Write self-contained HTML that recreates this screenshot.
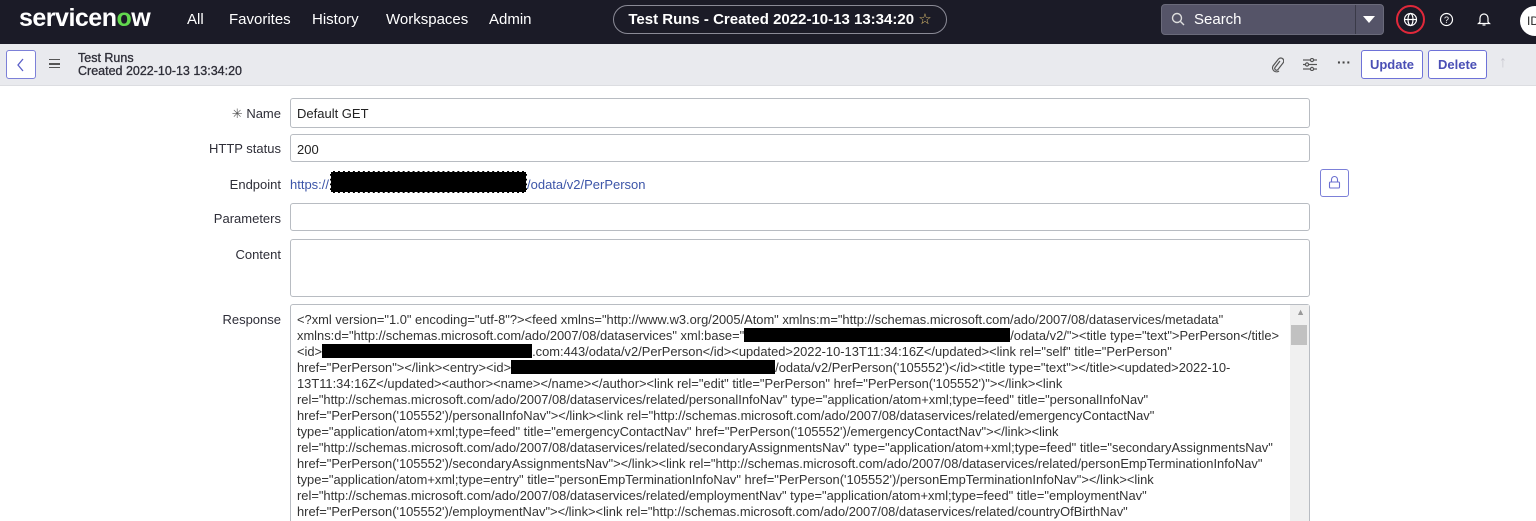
<!DOCTYPE html>
<html style="width:1536px;height:521px;overflow:hidden"><head><meta charset="utf-8"><style>
*{margin:0;padding:0;box-sizing:border-box}
body{width:1536px;height:521px;overflow:hidden;background:#fff;font-family:"Liberation Sans",sans-serif;position:relative}
.a{position:absolute}
#top{left:0;top:0;width:1536px;height:44px;background:#1b1b27;color:#fff}
#top .n{position:absolute;top:11px;font-size:15px}
#sub{left:0;top:44px;width:1536px;height:42px;background:#e9eaee;border-bottom:1px solid #dcdde1}
.lbl{position:absolute;right:1255px;font-size:13px;color:#2e2e38;text-align:right}
.inp{position:absolute;left:290px;width:1020px;border:1px solid #b8bcc2;border-radius:3px;background:#fff;font-size:13px;color:#222;padding:7px 6px}
.btn{position:absolute;height:29px;border:1px solid #6e72d8;border-radius:3px;background:#fff;color:#4a4fb5;font-weight:bold;font-size:13px;text-align:center;line-height:27px}
#resp div{position:absolute;left:6px;white-space:nowrap;font-size:12.9px;color:#333}
.blk{display:inline-block;background:#000;height:14px;vertical-align:-2px}
</style></head><body>
<div id="top" class="a">
 <div class="a" style="left:19px;top:4px;font-size:25px;font-weight:bold;letter-spacing:-0.5px">servicen<span style="color:#62d84e">o</span>w</div>
 <div class="n" style="left:187px">All</div>
 <div class="n" style="left:229px">Favorites</div>
 <div class="n" style="left:312px">History</div>
 <div class="n" style="left:386px">Workspaces</div>
 <div class="n" style="left:489px">Admin</div>
 <div class="a" style="left:613px;top:5px;width:334px;height:29px;border:1px solid #8a8a96;border-radius:15px;font-size:15px;font-weight:bold;text-align:center;line-height:27px">Test Runs - Created 2022-10-13 13:34:20 <span style="color:#e0c070;font-weight:normal">☆</span></div>
 <div class="a" style="left:1161px;top:4px;width:223px;height:31px;background:#555468;border:1px solid #6a6a7a;border-radius:4px"></div>
 <div class="a" style="left:1355px;top:5px;width:1px;height:29px;background:#3a3a48"></div>
 <svg class="a" style="left:1171px;top:12px" width="14" height="14"><circle cx="6" cy="6" r="4.5" fill="none" stroke="#ddd" stroke-width="1.4"/><line x1="9.5" y1="9.5" x2="13" y2="13" stroke="#ddd" stroke-width="1.4"/></svg>
 <div class="n" style="left:1194px">Search</div>
 <svg class="a" style="left:1363px;top:16px" width="12" height="8"><path d="M0 0H12L6 7Z" fill="#fff"/></svg>
 <div class="a" style="left:1396px;top:5px;width:29px;height:29px;border:2px solid #e0283a;border-radius:50%"></div>
 <svg class="a" style="left:1403px;top:12px" width="15" height="15" fill="none" stroke="#fff" stroke-width="1.2"><circle cx="7.5" cy="7.5" r="6"/><ellipse cx="7.5" cy="7.5" rx="2.5" ry="6"/><line x1="1.5" y1="7.5" x2="13.5" y2="7.5"/></svg>
 <svg class="a" style="left:1439px;top:12px" width="15" height="15" fill="none" stroke="#fff" stroke-width="1.2"><circle cx="7.5" cy="7.5" r="6"/><text x="5" y="11" font-size="9" fill="#fff" stroke="none" font-family="Liberation Sans">?</text></svg>
 <svg class="a" style="left:1477px;top:12px" width="14" height="15" fill="none" stroke="#fff" stroke-width="1.2"><path d="M3 10V6a4 4 0 0 1 8 0v4l1.5 1.5h-11Z"/><path d="M5.5 13h3"/></svg>
 <div class="a" style="left:1520px;top:6px;width:30px;height:30px;border-radius:50%;background:#fff;color:#222;font-size:12px;line-height:30px;padding-left:7px">ID</div>
</div>
<div id="sub" class="a">
 <div class="a" style="left:6px;top:6px;width:30px;height:29px;border:1px solid #7c80d8;border-radius:3px;background:#fff"></div>
 <svg class="a" style="left:16px;top:14px" width="10" height="14"><path d="M7 1L2 7l5 6" fill="none" stroke="#5a5fc8" stroke-width="1.3"/></svg>
 <div class="a" style="left:49px;top:15px;width:11px;height:9px;border-top:1.5px solid #555;border-bottom:1.5px solid #555"></div>
 <div class="a" style="left:49px;top:19px;width:11px;height:1.5px;background:#555"></div>
 <div class="a" style="left:78px;top:8px;font-size:12.5px;color:#2e2e38;line-height:13px;-webkit-text-stroke:0.3px #2e2e38">Test Runs<br>Created 2022-10-13 13:34:20</div>
 <svg class="a" style="left:1271px;top:13px" width="13" height="16" fill="none" stroke="#555" stroke-width="1.2"><path d="M9 4L4 10.5a1.8 1.8 0 0 0 2.8 2.2L12 6a3 3 0 0 0-4.5-4L2 9a4 4 0 0 0 6 5"/></svg>
 <svg class="a" style="left:1303px;top:14px" width="14" height="13" stroke="#555" stroke-width="1.2" fill="#e9eaee"><line x1="0" y1="2" x2="14" y2="2"/><line x1="0" y1="6.5" x2="14" y2="6.5"/><line x1="0" y1="11" x2="14" y2="11"/><circle cx="9" cy="2" r="1.6"/><circle cx="4" cy="6.5" r="1.6"/><circle cx="9" cy="11" r="1.6"/></svg>
 <div class="a" style="left:1337px;top:10px;font-size:14px;color:#444;font-weight:bold">···</div>
 <div class="btn" style="left:1361px;top:6px;width:62px">Update</div>
 <div class="btn" style="left:1428px;top:6px;width:59px">Delete</div>
 <div class="a" style="left:1499px;top:10px;font-size:16px;color:#c8c8d0">↑</div>
</div>

<div class="lbl" style="top:106px"><span style="color:#555">✳</span> Name</div>
<div class="inp" style="top:98px;height:30px">Default GET</div>
<div class="lbl" style="top:141px">HTTP status</div>
<div class="inp" style="top:134px;height:28px">200</div>
<div class="lbl" style="top:177px">Endpoint</div>
<div class="a" style="left:290px;top:177px;font-size:13px;color:#3c55a8">https://</div>
<div class="a" style="left:330px;top:171px;width:197px;height:22px;background:#000;border:1px dashed #fff"></div>
<div class="a" style="left:527px;top:177px;font-size:13px;color:#3c55a8">/odata/v2/PerPerson</div>
<div class="a" style="left:1320px;top:169px;width:29px;height:28px;border:1px solid #7c80d8;border-radius:3px"></div>
<svg class="a" style="left:1328px;top:175px" width="13" height="15" fill="none" stroke="#6a6fd0" stroke-width="1.1"><path d="M3.5 7V4.5a3 3 0 0 1 6 0V7"/><rect x="1.5" y="7" width="10" height="6" rx="1"/></svg>
<div class="lbl" style="top:211px">Parameters</div>
<div class="inp" style="top:203px;height:28px"></div>
<div class="lbl" style="top:247px">Content</div>
<div class="inp" style="top:239px;height:58px"></div>
<div class="lbl" style="top:312px">Response</div>
<div id="resp" class="inp" style="top:304px;height:230px;padding:0">
 <div class="a" style="left:auto!important;right:0;top:0;width:19px;height:230px;background:#f0f0f0"></div>
 <div class="a" style="left:auto!important;right:2px;top:20px;width:16px;height:20px;background:#c1c1c1"></div>
 <div class="a" style="left:auto!important;right:4px;top:2px;color:#999;font-size:9px!important">▲</div>
 <div style="top:7px">&lt;?xml version="1.0" encoding="utf-8"?&gt;&lt;feed xmlns="http://www.w3.org/2005/Atom" xmlns:m="http://schemas.microsoft.com/ado/2007/08/dataservices/metadata"</div>
 <div style="top:23px">xmlns:d="http://schemas.microsoft.com/ado/2007/08/dataservices" xml:base="<span class="blk" style="width:266px"></span>/odata/v2/"&gt;&lt;title type="text"&gt;PerPerson&lt;/title&gt;</div>
 <div style="top:39px">&lt;id&gt;<span class="blk" style="width:210px"></span>.com:443/odata/v2/PerPerson&lt;/id&gt;&lt;updated&gt;2022-10-13T11:34:16Z&lt;/updated&gt;&lt;link rel="self" title="PerPerson"</div>
 <div style="top:55px">href="PerPerson"&gt;&lt;/link&gt;&lt;entry&gt;&lt;id&gt;<span class="blk" style="width:264px"></span>/odata/v2/PerPerson('105552')&lt;/id&gt;&lt;title type="text"&gt;&lt;/title&gt;&lt;updated&gt;2022-10-</div>
 <div style="top:71px">13T11:34:16Z&lt;/updated&gt;&lt;author&gt;&lt;name&gt;&lt;/name&gt;&lt;/author&gt;&lt;link rel="edit" title="PerPerson" href="PerPerson('105552')"&gt;&lt;/link&gt;&lt;link</div>
 <div style="top:87px">rel="http://schemas.microsoft.com/ado/2007/08/dataservices/related/personalInfoNav" type="application/atom+xml;type=feed" title="personalInfoNav"</div>
 <div style="top:103px">href="PerPerson('105552')/personalInfoNav"&gt;&lt;/link&gt;&lt;link rel="http://schemas.microsoft.com/ado/2007/08/dataservices/related/emergencyContactNav"</div>
 <div style="top:119px">type="application/atom+xml;type=feed" title="emergencyContactNav" href="PerPerson('105552')/emergencyContactNav"&gt;&lt;/link&gt;&lt;link</div>
 <div style="top:135px">rel="http://schemas.microsoft.com/ado/2007/08/dataservices/related/secondaryAssignmentsNav" type="application/atom+xml;type=feed" title="secondaryAssignmentsNav"</div>
 <div style="top:151px">href="PerPerson('105552')/secondaryAssignmentsNav"&gt;&lt;/link&gt;&lt;link rel="http://schemas.microsoft.com/ado/2007/08/dataservices/related/personEmpTerminationInfoNav"</div>
 <div style="top:167px">type="application/atom+xml;type=entry" title="personEmpTerminationInfoNav" href="PerPerson('105552')/personEmpTerminationInfoNav"&gt;&lt;/link&gt;&lt;link</div>
 <div style="top:183px">rel="http://schemas.microsoft.com/ado/2007/08/dataservices/related/employmentNav" type="application/atom+xml;type=feed" title="employmentNav"</div>
 <div style="top:199px">href="PerPerson('105552')/employmentNav"&gt;&lt;/link&gt;&lt;link rel="http://schemas.microsoft.com/ado/2007/08/dataservices/related/countryOfBirthNav"</div>
</div>
</body></html>
